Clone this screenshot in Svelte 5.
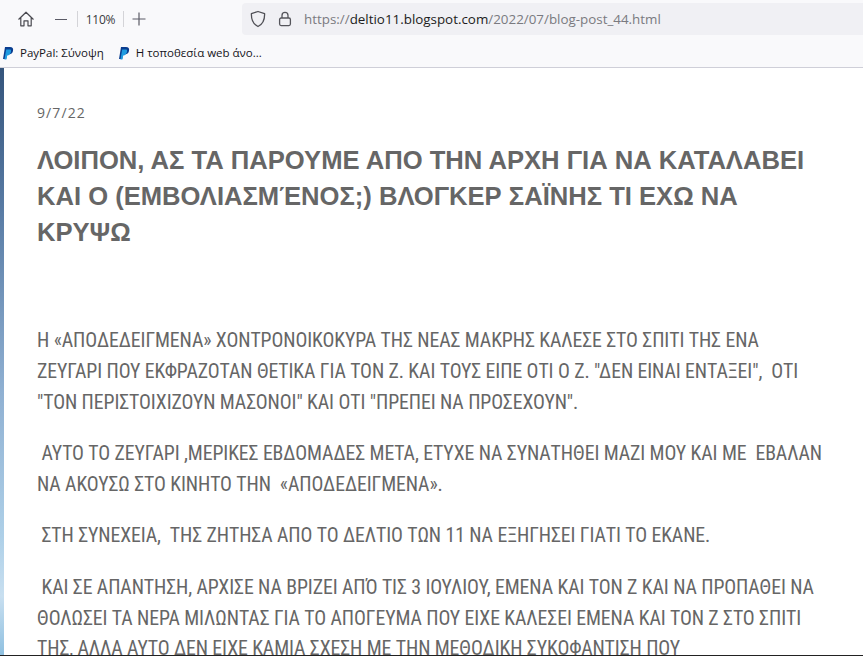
<script>
  const paragraphs = [
    ['Η «ΑΠΟΔΕΔΕΙΓΜΕΝΑ» ΧΟΝΤΡΟΝΟΙΚΟΚΥΡΑ ΤΗΣ ΝΕΑΣ ΜΑΚΡΗΣ ΚΑΛΕΣΕ ΣΤΟ ΣΠΙΤΙ ΤΗΣ ΕΝΑ',
     'ΖΕΥΓΑΡΙ ΠΟΥ ΕΚΦΡΑΖΟΤΑΝ ΘΕΤΙΚΑ ΓΙΑ ΤΟΝ Ζ. ΚΑΙ ΤΟΥΣ ΕΙΠΕ ΟΤΙ Ο Ζ. "ΔΕΝ ΕΙΝΑΙ ΕΝΤΑΞΕΙ",  ΟΤΙ',
     '"ΤΟΝ ΠΕΡΙΣΤΟΙΧΙΖΟΥΝ ΜΑΣΟΝΟΙ" ΚΑΙ ΟΤΙ "ΠΡΕΠΕΙ ΝΑ ΠΡΟΣΕΧΟΥΝ".'],
    [' ΑΥΤΟ ΤΟ ΖΕΥΓΑΡΙ ,ΜΕΡΙΚΕΣ ΕΒΔΟΜΑΔΕΣ ΜΕΤΑ, ΕΤΥΧΕ ΝΑ ΣΥΝΑΤΗΘΕΙ ΜΑΖΙ ΜΟΥ ΚΑΙ ΜΕ  ΕΒΑΛΑΝ',
     'ΝΑ ΑΚΟΥΣΩ ΣΤΟ ΚΙΝΗΤΟ ΤΗΝ  «ΑΠΟΔΕΔΕΙΓΜΕΝΑ».'],
    [' ΣΤΗ ΣΥΝΕΧΕΙΑ,  ΤΗΣ ΖΗΤΗΣΑ ΑΠΟ ΤΟ ΔΕΛΤΙΟ ΤΩΝ 11 ΝΑ ΕΞΗΓΗΣΕΙ ΓΙΑΤΙ ΤΟ ΕΚΑΝΕ.'],
    [' ΚΑΙ ΣΕ ΑΠΑΝΤΗΣΗ, ΑΡΧΙΣΕ ΝΑ ΒΡΙΖΕΙ ΑΠΌ ΤΙΣ 3 ΙΟΥΛΙΟΥ, ΕΜΕΝΑ ΚΑΙ ΤΟΝ Ζ ΚΑΙ ΝΑ ΠΡΟΠΑΘΕΙ ΝΑ',
     'ΘΟΛΩΣΕΙ ΤΑ ΝΕΡΑ ΜΙΛΩΝΤΑΣ ΓΙΑ ΤΟ ΑΠΟΓΕΥΜΑ ΠΟΥ ΕΙΧΕ ΚΑΛΕΣΕΙ ΕΜΕΝΑ ΚΑΙ ΤΟΝ Ζ ΣΤΟ ΣΠΙΤΙ',
     'ΤΗΣ, ΑΛΛΑ ΑΥΤΟ ΔΕΝ ΕΙΧΕ ΚΑΜΙΑ ΣΧΕΣΗ ΜΕ ΤΗΝ ΜΕΘΟΔΙΚΗ ΣΥΚΟΦΑΝΤΙΣΗ ΠΟΥ']
  ];
</script>

<div class="page">
  <header class="chrome">
    <div class="toolbar">
      <div class="tools">
        <svg class="home" viewBox="0 0 18 18" width="18" height="18"><path d="M1.8 9.2 9 2.2 16.2 9.2M3.8 7.5V15.8H7V10.8H11V15.8H14.2V7.5" fill="none" stroke="#4a4a50" stroke-width="1.2" stroke-linejoin="round" stroke-linecap="round"/></svg>
        <div class="minus"></div>
        <div class="sep"></div>
        <span class="zoomval">110%</span>
        <div class="sep"></div>
        <svg class="plus" viewBox="0 0 14 14" width="14" height="14"><path d="M7 .5V13.5M.5 7H13.5" stroke="#5b5b66" stroke-width="1.2"/></svg>
      </div>
      <div class="urlbar">
        <svg viewBox="0 0 16 18" width="16" height="18"><path d="M8 1.5 14.6 3.6C14.8 9.5 13 14 8 16.5 3 14 1.2 9.5 1.4 3.6Z" fill="none" stroke="#4f4f55" stroke-width="1.3" stroke-linejoin="round"/></svg>
        <svg class="lock" viewBox="0 0 14 16" width="14" height="16"><rect x="1.6" y="7" width="10.8" height="7.6" rx="1.5" fill="none" stroke="#55555b" stroke-width="1.3"/><path d="M4 7V4.4a3 3 0 0 1 6 0V7" fill="none" stroke="#55555b" stroke-width="1.3"/></svg>
        <span class="url">https://<b>deltio11.blogspot.com</b>/2022/07/blog-post_44.html</span>
      </div>
    </div>
    <div class="bookmarks">
      <div class="bm"><svg viewBox="0 0 12 14" width="12" height="14"><path d="M3 1H8C10.5 1 11.6 2.6 11 5 10.4 7.6 8.4 8.4 6.4 8.4H5L4.2 13H1Z" fill="#0a3d8f"/><path d="M4.2 3.6H8.6C9.6 4.6 9 8.6 6 9.6H5.2L4.4 13.6H2.4Z" fill="#1e9be0"/></svg><span>PayPal: Σύνοψη</span></div>
      <div class="bm second"><svg viewBox="0 0 12 14" width="12" height="14"><path d="M3 1H8C10.5 1 11.6 2.6 11 5 10.4 7.6 8.4 8.4 6.4 8.4H5L4.2 13H1Z" fill="#0a3d8f"/><path d="M4.2 3.6H8.6C9.6 4.6 9 8.6 6 9.6H5.2L4.4 13.6H2.4Z" fill="#1e9be0"/></svg><span>Η τοποθεσία web άνο...</span></div>
    </div>
  </header>
  <div class="body">
    <div class="strip"></div>
    <main class="post">
      <div class="date">9/7/22</div>
      <h1>ΛΟΙΠΟΝ, ΑΣ ΤΑ ΠΑΡΟΥΜΕ ΑΠΟ ΤΗΝ ΑΡΧΗ ΓΙΑ ΝΑ ΚΑΤΑΛΑΒΕΙ<br>ΚΑΙ Ο (ΕΜΒΟΛΙΑΣΜΈΝΟΣ;) ΒΛΟΓΚΕΡ ΣΑΪΝΗΣ ΤΙ ΕΧΩ ΝΑ<br>ΚΡΥΨΩ</h1>
      <div class="content">
        {#each paragraphs as p}
          <p>{#each p as l}<span class="line">{l}</span>{/each}</p>
        {/each}
      </div>
    </main>
  </div>
  <div class="edge"></div>
</div>

<style>
  :global(body) { margin: 0; background: #fff; overflow: hidden; }
  .page { width: 863px; height: 656px; overflow: hidden; display: flex; flex-direction: column; }
  .chrome { height: 68px; box-sizing: border-box; background: #f9f9fb; border-bottom: 1px solid #cfcfd8; font-family: "Open Sans", sans-serif; flex: none; }
  .toolbar { height: 38px; display: flex; align-items: center; box-sizing: border-box; }
  .tools { width: 242px; display: flex; align-items: center; flex: none; }
  .home { margin-left: 17px; }
  .minus { width: 12px; height: 1px; background: #5b5b66; margin-left: 20px; }
  .sep { width: 1px; height: 16px; background: #d4d4d8; }
  .minus + .sep { margin-left: 10px; }
  .zoomval { font-size: 12px; color: #3a3a40; width: 45px; text-align: center; letter-spacing: -.2px; }
  .plus { margin-left: 8px; }
  .urlbar { width: 621px; height: 32px; background: #f0f0f4; border-radius: 4px 0 0 4px; display: flex; align-items: center; padding-left: 8px; box-sizing: border-box; }
  .lock { margin-left: 12px; }
  .url { margin-left: 12px; font: 13.38px "Open Sans", sans-serif; color: #7a7a80; white-space: nowrap; }
  .url b { font-weight: 400; color: #1c1c20; }
  .bookmarks { height: 29px; display: flex; align-items: center; font-size: 11.5px; color: #15141a; }
  .bm { display: flex; align-items: center; margin-left: 2px; gap: 6px; }
  .bm.second { margin-left: 14px; }
  .body { flex: 1; display: flex; min-height: 0; overflow: hidden; }
  .strip { width: 4px; flex: none; background: linear-gradient(180deg, #35557c 0%, #5a7da6 25%, #8fb0d2 55%, #aed0e8 80%, #c8dff0 90%, #8fc0e0 100%); }
  .post { padding: 35px 0 0 33px; flex: 1; min-width: 0; }
  .date { font: 14px/20px "Open Sans", sans-serif; color: #666; letter-spacing: 1.1px; }
  h1 { margin: 20px 0 0; font: 700 25.6px/35.8px "Liberation Sans", sans-serif; color: #666; white-space: nowrap; }
  .content { margin-top: 76px; font: 400 19.8px/30.6px Roboto, sans-serif; font-stretch: 75%; color: #666; letter-spacing: -.09px; }
  p { margin: 0 0 21px; }
  .line { display: block; white-space: pre; }
  .edge { height: 1px; flex: none; background: #222; }
</style>
